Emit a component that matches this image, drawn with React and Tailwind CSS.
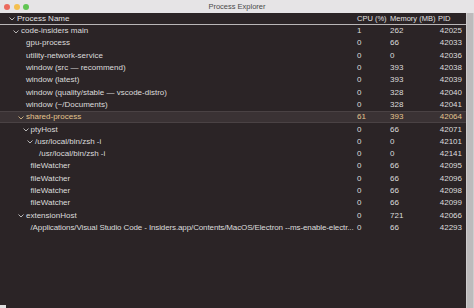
import React from "react";

const rows = [
  { name: "code-insiders main", level: 1, open: true, cpu: "1", mem: "262", pid: "42025" },
  { name: "gpu-process", level: 2, cpu: "0", mem: "66", pid: "42033" },
  { name: "utility-network-service", level: 2, cpu: "0", mem: "0", pid: "42036" },
  { name: "window (src — recommend)", level: 2, cpu: "0", mem: "393", pid: "42038" },
  { name: "window (latest)", level: 2, cpu: "0", mem: "393", pid: "42039" },
  { name: "window (quality/stable — vscode-distro)", level: 2, cpu: "0", mem: "328", pid: "42040" },
  { name: "window (~/Documents)", level: 2, cpu: "0", mem: "328", pid: "42041" },
  { name: "shared-process", level: 2, open: true, cpu: "61", mem: "393", pid: "42064", active: true },
  { name: "ptyHost", level: 3, open: true, cpu: "0", mem: "66", pid: "42071" },
  { name: "/usr/local/bin/zsh -i", level: 4, open: true, cpu: "0", mem: "0", pid: "42101" },
  { name: "/usr/local/bin/zsh -i", level: 5, cpu: "0", mem: "0", pid: "42141" },
  { name: "fileWatcher", level: 3, cpu: "0", mem: "66", pid: "42095" },
  { name: "fileWatcher", level: 3, cpu: "0", mem: "66", pid: "42096" },
  { name: "fileWatcher", level: 3, cpu: "0", mem: "66", pid: "42098" },
  { name: "fileWatcher", level: 3, cpu: "0", mem: "66", pid: "42099" },
  { name: "extensionHost", level: 2, open: true, cpu: "0", mem: "721", pid: "42066" },
  {
    name: "/Applications/Visual Studio Code - Insiders.app/Contents/MacOS/Electron --ms-enable-electr...",
    level: 3,
    cpu: "0",
    mem: "66",
    pid: "42293",
    tight: true,
  },
];

const indents = ["pl-[17px]", "pl-[21px]", "pl-[26px]", "pl-[30.5px]", "pl-[35px]", "pl-[39px]"];

function Chevron() {
  return (
    <svg width="6" height="4" viewBox="0 0 6 4" className="absolute -left-[8px] top-[2.5px]">
      <path d="M0.5 0.5 L3 3 L5.5 0.5" fill="none" stroke="currentColor" strokeWidth="0.8" />
    </svg>
  );
}

function Row({ r }) {
  const color = r.active ? "text-[#e3c48e]" : "text-[#dcdcdc]";
  return (
    <div
      className={`flex h-[12.3px] items-center leading-none ${color} ${
        r.active ? "bg-[#3a3234] border-y border-[#4a4244]" : ""
      }`}
    >
      <div className={`w-[357px] shrink-0 ${indents[r.level]}`}>
        <div className="relative">
          {r.open && <Chevron />}
          <div className={`whitespace-nowrap ${r.tight ? "tracking-[-0.12px]" : ""}`}>{r.name}</div>
        </div>
      </div>
      <div className="w-[33px] shrink-0">{r.cpu}</div>
      <div className="w-[48px] shrink-0">{r.mem}</div>
      <div className="w-[24px] shrink-0 text-right">{r.pid}</div>
    </div>
  );
}

export default function App() {
  return (
    <div
      className="flex h-[308px] w-[474px] flex-col overflow-hidden bg-[#2b2426] text-[8px]"
      style={{ fontFamily: '"Liberation Sans", Arial, sans-serif' }}
    >
      <div className="relative flex h-[13px] shrink-0 items-center justify-center bg-[#e6e4e6] text-[#4a4a4a]">
        <div className="absolute left-[4px] top-[3.5px] flex gap-[3.5px]">
          <span className="h-[6px] w-[6px] rounded-full bg-[#ec6a5e]" />
          <span className="h-[6px] w-[6px] rounded-full bg-[#f4bf4f]" />
          <span className="h-[6px] w-[6px] rounded-full bg-[#61c554]" />
        </div>
        <span className="text-[7.5px]">Process Explorer</span>
      </div>
      <div className="flex flex-1">
        <div className="flex w-[466px] flex-col">
          <div className="flex h-[12px] items-center whitespace-nowrap border-b border-[#b9b6b7] leading-none text-[#e2e2e2]">
            <div className="w-[357px] shrink-0 pl-[17px]">
              <div className="relative">
                <Chevron />
                Process Name
              </div>
            </div>
            <div className="w-[33px] shrink-0 text-[7.5px]">CPU (%)</div>
            <div className="w-[48px] shrink-0 text-[7.5px]">Memory (MB)</div>
            <div className="w-[24px] shrink-0 text-[7.5px]">PID</div>
          </div>
          {rows.map((r, i) => (
            <Row key={i} r={r} />
          ))}
          <div className="flex-1" />
          <div className="h-[3px] w-[6px] bg-[#e0e0e0]" />
        </div>
        <div className="flex flex-1 bg-[#cfcdce]">
          <div className="ml-[1px] w-[6px] bg-[#bdbbbc]" />
        </div>
      </div>
    </div>
  );
}
